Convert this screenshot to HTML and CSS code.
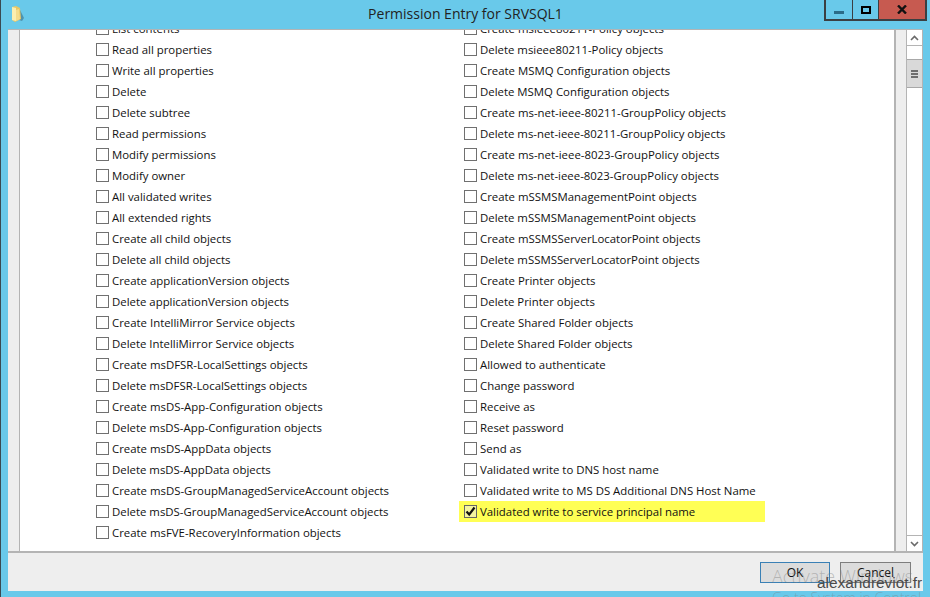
FILE: index.html
```html
<!DOCTYPE html>
<html lang="en">
<head>
<meta charset="utf-8">
<title>Permission Entry for SRVSQL1</title>
<link rel="stylesheet" href="styles.css">
</head>
<body>
<div class="window">
  <header class="titlebar">
    <svg class="folder" width="14" height="18" viewBox="0 0 14 18"><path d="M9 5 L13 13 L11 16 L8 15 Z" fill="#4f93ad"/><path d="M1 2 L5 1 L9 3 L10 14 L4 17 L1 15 Z" fill="#e9c765"/><path d="M1 2 L5 3 L5 16 L1 15 Z" fill="#fbeeb0"/><path d="M5 5 L8 4 L9 14 L5 16 Z" fill="#f4dc8c"/></svg>
    <div class="title">Permission Entry for SRVSQL1</div>
    <div class="controls">
      <div class="ctl ctl-min"><span class="min-bar"></span></div>
      <div class="ctl ctl-max"><span class="max-box"></span></div>
      <div class="ctl ctl-close"><svg width="10" height="9" viewBox="0 0 10 9"><path d="M1 0.5 L9 8.5 M9 0.5 L1 8.5" stroke="#111" stroke-width="2.4" fill="none"/></svg></div>
    </div>
  </header>
  <div class="client">
    <div class="main">
      <div class="gutter"></div>
      <div class="list">
        <div class="lists">
          <div class="col col-a">
            <label class="row"><span class="cb"></span>List contents</label>
            <label class="row"><span class="cb"></span>Read all properties</label>
            <label class="row"><span class="cb"></span>Write all properties</label>
            <label class="row"><span class="cb"></span>Delete</label>
            <label class="row"><span class="cb"></span>Delete subtree</label>
            <label class="row"><span class="cb"></span>Read permissions</label>
            <label class="row"><span class="cb"></span>Modify permissions</label>
            <label class="row"><span class="cb"></span>Modify owner</label>
            <label class="row"><span class="cb"></span>All validated writes</label>
            <label class="row"><span class="cb"></span>All extended rights</label>
            <label class="row"><span class="cb"></span>Create all child objects</label>
            <label class="row"><span class="cb"></span>Delete all child objects</label>
            <label class="row"><span class="cb"></span>Create applicationVersion objects</label>
            <label class="row"><span class="cb"></span>Delete applicationVersion objects</label>
            <label class="row"><span class="cb"></span>Create IntelliMirror Service objects</label>
            <label class="row"><span class="cb"></span>Delete IntelliMirror Service objects</label>
            <label class="row"><span class="cb"></span>Create msDFSR-LocalSettings objects</label>
            <label class="row"><span class="cb"></span>Delete msDFSR-LocalSettings objects</label>
            <label class="row"><span class="cb"></span>Create msDS-App-Configuration objects</label>
            <label class="row"><span class="cb"></span>Delete msDS-App-Configuration objects</label>
            <label class="row"><span class="cb"></span>Create msDS-AppData objects</label>
            <label class="row"><span class="cb"></span>Delete msDS-AppData objects</label>
            <label class="row"><span class="cb"></span>Create msDS-GroupManagedServiceAccount objects</label>
            <label class="row"><span class="cb"></span>Delete msDS-GroupManagedServiceAccount objects</label>
            <label class="row"><span class="cb"></span>Create msFVE-RecoveryInformation objects</label>
          </div>
          <div class="col col-b">
            <label class="row"><span class="cb"></span>Create msieee80211-Policy objects</label>
            <label class="row"><span class="cb"></span>Delete msieee80211-Policy objects</label>
            <label class="row"><span class="cb"></span>Create MSMQ Configuration objects</label>
            <label class="row"><span class="cb"></span>Delete MSMQ Configuration objects</label>
            <label class="row"><span class="cb"></span>Create ms-net-ieee-80211-GroupPolicy objects</label>
            <label class="row"><span class="cb"></span>Delete ms-net-ieee-80211-GroupPolicy objects</label>
            <label class="row"><span class="cb"></span>Create ms-net-ieee-8023-GroupPolicy objects</label>
            <label class="row"><span class="cb"></span>Delete ms-net-ieee-8023-GroupPolicy objects</label>
            <label class="row"><span class="cb"></span>Create mSSMSManagementPoint objects</label>
            <label class="row"><span class="cb"></span>Delete mSSMSManagementPoint objects</label>
            <label class="row"><span class="cb"></span>Create mSSMSServerLocatorPoint objects</label>
            <label class="row"><span class="cb"></span>Delete mSSMSServerLocatorPoint objects</label>
            <label class="row"><span class="cb"></span>Create Printer objects</label>
            <label class="row"><span class="cb"></span>Delete Printer objects</label>
            <label class="row"><span class="cb"></span>Create Shared Folder objects</label>
            <label class="row"><span class="cb"></span>Delete Shared Folder objects</label>
            <label class="row"><span class="cb"></span>Allowed to authenticate</label>
            <label class="row"><span class="cb"></span>Change password</label>
            <label class="row"><span class="cb"></span>Receive as</label>
            <label class="row"><span class="cb"></span>Reset password</label>
            <label class="row"><span class="cb"></span>Send as</label>
            <label class="row"><span class="cb"></span>Validated write to DNS host name</label>
            <label class="row"><span class="cb"></span>Validated write to MS DS Additional DNS Host Name</label>
            <label class="row row-hl"><span class="cb"><svg width="11" height="11" viewBox="0 0 11 11"><path d="M1.5 5.5 L4.2 8.5 L9.5 1.5" stroke="#111" stroke-width="2.2" fill="none"/></svg></span>Validated write to service principal name</label>
          </div>
        </div>
      </div>
      <div class="track"></div>
      <div class="scrollbar">
        <div class="sb-btn"><svg width="9" height="6" viewBox="0 0 9 6"><path d="M1 5 L4.5 1.5 L8 5" stroke="#6a6a6a" stroke-width="1.6" fill="none"/></svg></div>
        <div class="sb-thumb-wrap"><div class="sb-thumb"><span></span><span></span><span></span></div></div>
        <div class="sb-btn"><svg width="9" height="6" viewBox="0 0 9 6"><path d="M1 1 L4.5 4.5 L8 1" stroke="#6a6a6a" stroke-width="1.6" fill="none"/></svg></div>
      </div>
    </div>
    <footer class="footer">
      <button class="btn btn-ok">OK</button>
      <button class="btn">Cancel</button>
    </footer>
  </div>
  <div class="activate"><div class="activate-head">Activate Windows</div><div class="activate-sub">Go to System in Control</div></div>
  <div class="credit">alexandreviot.fr</div>
</div>
</body>
</html>
```

FILE: styles.css
```css
* { box-sizing: border-box; }
html, body { margin: 0; padding: 0; height: 100%; }
body { overflow: hidden; background: #69c9ea; }
.window {
  position: relative;
  width: 930px;
  height: 597px;
  background: #69c9ea;
  border-left: 1px solid #3a4a52;
  padding: 0 7px 6px 7px;
  display: flex;
  flex-direction: column;
  overflow: hidden;
  font-family: "Open Sans", "Noto Sans", sans-serif;
  color: #111;
}
.titlebar {
  position: relative;
  flex: 0 0 29px;
  margin: 0 -7px;
}
.folder { position: absolute; left: 10px; top: 5px; }
.title {
  text-align: center;
  font-size: 14px;
  line-height: 28px;
  color: #222;
}
.controls {
  position: absolute;
  top: 0;
  left: 823px;
  display: flex;
  height: 21px;
  border: 2px solid #3b3f42;
  border-top: 0;
}
.ctl { display: flex; align-items: center; justify-content: center; height: 19px; }
.ctl-min { width: 27px; border-right: 1px solid #3b3f42; }
.ctl-max { width: 26px; border-right: 1px solid #3b3f42; }
.ctl-close { width: 46px; background: #c75a50; }
.min-bar { display: block; width: 10px; height: 3px; background: #2b6c88; margin-top: 5px; }
.max-box { display: block; width: 10px; height: 8px; border: 2px solid #000; }
.client {
  flex: 1;
  width: 915px;
  display: flex;
  flex-direction: column;
  background: #eeeeee;
  min-height: 0;
}
.main {
  display: flex;
  height: 524px;
  border-top: 1px solid #b4b4b4;
  border-bottom: 2px solid #b4b4b4;
}
.gutter { background: #eeeeee; border-right: 1px solid #b4b4b4; width: 12px; }
.list { flex: 1; background: #fff; overflow: hidden; position: relative; }
.lists {
  display: flex;
  margin-top: -12px;
  font-size: 11.4px;
}
.col { display: flex; flex-direction: column; }
.col-a { flex: 0 0 439px; padding-left: 76px; }
.col-b { flex: 0 0 306px; }
.col-b .row { padding-left: 5px; }
.row {
  display: flex;
  align-items: center;
  height: 21px;
  line-height: 21px;
  white-space: nowrap;
}
.row-hl { background: #ffff55; }
.cb {
  flex: 0 0 13px;
  width: 13px;
  height: 13px;
  border: 1px solid #707070;
  background: #fff;
  margin-right: 3px;
  display: flex;
  align-items: center;
  justify-content: center;
}
.row-hl .cb { background: #f4f4a0; border-color: #666; }
.track { background: #eeeeee; border-left: 2px solid #b4b4b4; width: 12px; }
.scrollbar {
  width: 17px;
  display: flex;
  flex-direction: column;
  background: #fff;
  border: 1px solid #b4b4b4;
  border-top: 0;
  border-bottom: 0;
}
.sb-btn {
  height: 16px;
  flex: 0 0 16px;
  display: flex;
  align-items: center;
  justify-content: center;
  background: #fff;
  border-bottom: 1px solid #b4b4b4;
}
.sb-btn:last-child { border-bottom: 0; border-top: 1px solid #b4b4b4; }
.sb-thumb-wrap { flex: 1; padding-top: 13px; }
.sb-thumb {
  height: 29px;
  background: #d9d9d9;
  border-top: 1px solid #a8a8a8;
  border-bottom: 1px solid #a8a8a8;
  display: flex;
  flex-direction: column;
  align-items: center;
  justify-content: center;
  gap: 1px;
}
.sb-thumb span { display: block; width: 7px; height: 2px; background: #6e6e6e; }
.footer {
  flex: 1;
  display: flex;
  justify-content: flex-end;
  gap: 10px;
  padding: 9px 12px 0 0;
}
.btn {
  width: 71px;
  height: 21px;
  padding: 0;
  background: #dcdcdc;
  border: 1px solid #7e7e7e;
  font: 12px "Open Sans", "Noto Sans", sans-serif;
  color: #111;
}
.btn-ok { width: 70px; border-color: #3a80b5; }
.activate {
  position: absolute;
  left: 771px;
  top: 563px;
  color: rgba(120, 120, 120, 0.42);
  white-space: nowrap;
  font-family: "Open Sans", sans-serif;
  font-weight: 300;
}
.activate-head { font-size: 18px; line-height: 26px; }
.activate-sub { font-size: 14px; line-height: 18px; }
.credit {
  position: absolute;
  left: 816px;
  top: 573px;
  font-size: 15.4px;
  line-height: 20px;
  color: #4a4a4a;
  white-space: nowrap;
  font-family: "Liberation Sans", sans-serif;
}
```
